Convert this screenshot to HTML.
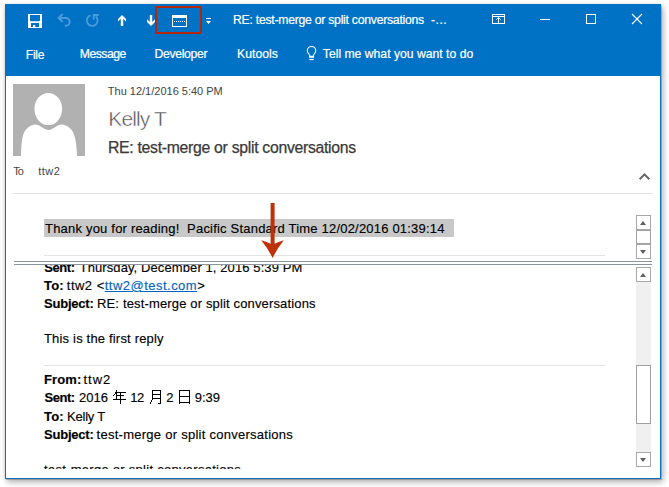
<!DOCTYPE html>
<html><head><meta charset="utf-8">
<style>
html,body{margin:0;padding:0;background:#fff;width:669px;height:487px;overflow:hidden;position:relative;font-family:"Liberation Sans",sans-serif;}
.a{position:absolute;white-space:pre;}
#win{position:absolute;left:5px;top:4px;width:654px;height:473px;border:1px solid #0a71c4;background:#fff;box-shadow:1px 1px 0 rgba(120,90,70,0.35), 2px 3px 6px rgba(0,0,0,0.33), -1px 0 2px rgba(140,110,90,0.12);}
#bar{position:absolute;left:5px;top:4px;width:656px;height:72px;background:#0072c6;}
b{font-weight:bold;}
.sbtn{border:1px solid #a8a8a8;background:#fff;}
.sthumb{border:1px solid #a0a0a0;background:#fff;}
.tu,.td{position:absolute;left:3px;width:0;height:0;border-left:3.5px solid transparent;border-right:3.5px solid transparent;}
.tu{top:4.5px;border-bottom:4px solid #606060;}
.td{top:5px;border-top:4px solid #606060;}
a{color:#0563c1;text-decoration:underline;-webkit-text-stroke-color:#0563c1;}
</style></head><body>
<div id="win"></div>
<div id="bar"></div>
<!-- quick access icons -->
<svg class="a" style="left:0;top:0" width="669" height="76" viewBox="0 0 669 76">
  <!-- save -->
  <g fill="#fff">
    <path d="M28 14h14v14h-14z M30 15v5.5l0.8 0.8h8.4l0.8-0.8v-5.5z M31 23v4h2v-2h2.2v2h3.8v-4z" fill-rule="evenodd"/>
  </g>
  <!-- undo (dim) -->
  <g fill="none" stroke="#4d9ad8" stroke-width="1.9">
    <path d="M58.5 18h7.3a3.9 3.9 0 0 1 0 7.8h-1"/>
    <path d="M62.6 14l-4 4l4 4"/>
  </g>
  <!-- redo circular (dim) -->
  <g fill="none" stroke="#4d9ad8" stroke-width="1.8">
    <path d="M90.6 15.3a5.4 5.4 0 1 0 5.2 1.1"/>
    <path d="M93.7 19.6v-4.6h5.1"/>
  </g>
  <!-- up arrow -->
  <path d="M122 14.9L126 18.9V21.6L123.2 18.8V25.9H120.8V18.8L118 21.6V18.9Z" fill="#fff"/>
  <!-- down arrow -->
  <path d="M151 25.9L147 21.9V19.2L149.8 22V14.9H152.2V22L155 19.2V21.9Z" fill="#fff"/>
  <!-- red highlight box -->
  <rect x="156" y="7" width="45" height="26" fill="none" stroke="#b3260c" stroke-width="2"/>
  <!-- window icon -->
  <g fill="#fff">
    <path d="M172 15h15v12h-15z M173 18v8h13v-8z" fill-rule="evenodd"/>
    <rect x="174" y="21" width="1" height="1"/><rect x="176" y="21" width="1" height="1"/><rect x="178" y="21" width="1" height="1"/>
    <rect x="180" y="21" width="1" height="1"/><rect x="182" y="21" width="1" height="1"/><rect x="184" y="21" width="1" height="1"/>
  </g>
  <!-- customize dropdown -->
  <g fill="#fff">
    <rect x="206" y="18" width="5" height="1"/>
    <path d="M206 21h5l-2.5 3z"/>
  </g>
  <!-- ribbon display options -->
  <g fill="none" stroke="#fff" stroke-width="1">
    <rect x="492.5" y="14.5" width="12" height="9"/>
    <path d="M492.5 16.5h12"/>
    <path d="M498.5 24v-6.5 M496.3 19.7l2.2-2.2l2.2 2.2"/>
  </g>
  <!-- minimize -->
  <rect x="540" y="19" width="10" height="1" fill="#fff"/>
  <!-- maximize -->
  <rect x="586.5" y="14.5" width="9" height="9" fill="none" stroke="#fff" stroke-width="1"/>
  <!-- close -->
  <path d="M632 14l10 10M642 14l-10 10" stroke="#fff" stroke-width="1.1" fill="none"/>
  <!-- lightbulb -->
  <g fill="none" stroke="#fff" stroke-width="1.1">
    <path d="M309.6 56.2v-1c0-0.9-2.25-2.1-2.25-4.55a4.2 4.2 0 0 1 8.4 0c0 2.45-2.25 3.65-2.25 4.55v1z"/>
  </g>
  <rect x="309.1" y="56" width="4.9" height="1.8" fill="#fff"/>
  <rect x="309.3" y="59" width="4.5" height="1.1" fill="#fff"/>
</svg>


<div class="a" id="t_title" style="left:233px;top:14.47px;font-size:12.2px;line-height:12.2px;letter-spacing:-0.24px;color:#fff;-webkit-text-stroke:0.2px #fff;">RE: test-merge or split conversations</div>
<div class="a" id="t_dots" style="left:431.0px;top:14.47px;font-size:12.2px;line-height:12.2px;letter-spacing:0.5px;color:#fff;-webkit-text-stroke:0.2px #fff;">-...</div>
<div class="a" id="t_file" style="left:25.8px;top:48.67px;font-size:12.2px;line-height:12.2px;letter-spacing:-0.3px;color:#fff;-webkit-text-stroke:0.2px #fff;">File</div>
<div class="a" id="t_msg" style="left:79.8px;top:47.67px;font-size:12.2px;line-height:12.2px;letter-spacing:-0.5px;color:#fff;-webkit-text-stroke:0.2px #fff;">Message</div>
<div class="a" id="t_dev" style="left:154.5px;top:47.67px;font-size:12.2px;line-height:12.2px;letter-spacing:-0.31px;color:#fff;-webkit-text-stroke:0.2px #fff;">Developer</div>
<div class="a" id="t_kut" style="left:237.0px;top:47.67px;font-size:12.2px;line-height:12.2px;letter-spacing:0.05px;color:#fff;-webkit-text-stroke:0.2px #fff;">Kutools</div>
<div class="a" id="t_tell" style="left:322.8px;top:47.67px;font-size:12.2px;line-height:12.2px;letter-spacing:0px;color:#fff;-webkit-text-stroke:0.2px #fff;">Tell me what you want to do</div>
<div class="a" id="t_date" style="left:107.8px;top:85.79px;font-size:11px;line-height:11px;letter-spacing:0px;color:#444;">Thu 12/1/2016 5:40 PM</div>
<div class="a" id="t_name" style="left:108.3px;top:108.12px;font-size:21px;line-height:21px;letter-spacing:-0.88px;color:#505050;-webkit-text-stroke:0.45px #fff;">Kelly T</div>
<div class="a" id="t_subj" style="left:108px;top:139.53px;font-size:15.8px;line-height:15.8px;letter-spacing:-0.3px;color:#3a3a3a;-webkit-text-stroke:0.25px #3a3a3a;">RE: test-merge or split conversations</div>
<div class="a" id="t_to" style="left:13.2px;top:165.69px;font-size:11px;line-height:11px;letter-spacing:-1.0px;color:#444;">To</div>
<div class="a" id="t_ttw2" style="left:38.3px;top:165.69px;font-size:11px;line-height:11px;letter-spacing:0.43px;color:#444;">ttw2</div>

<!-- header -->
<svg class="a" style="left:13px;top:84px" width="72" height="72" viewBox="0 0 72 72">
  <rect width="72" height="72" fill="#b1b1b1"/>
  <ellipse cx="35.3" cy="25" rx="13.8" ry="16.1" fill="#fff"/>
  <path d="M8 72 C8.3 58 9.3 50 12.6 46 C15.5 42.3 19.5 40.5 23 40.5 C27.5 41 31 45.9 35.5 45.9 C40 45.9 43.5 41 48 40.5 C51.5 40.5 55.5 42.3 58.6 46 C61.8 50 63.6 58 64 72 Z" fill="#fff"/>
</svg>

<svg class="a" style="left:636px;top:170px" width="16" height="12"><path d="M3.7 9.2L8.5 4.4L13.3 9.2" fill="none" stroke="#666" stroke-width="2"/></svg>
<div class="a" style="left:13px;top:193px;width:640px;height:1px;background:#e1e1e1;"></div>



<div class="a" style="left:13px;top:193px;width:640px;height:1px;background:#e1e1e1;"></div>
<!-- upper pane -->
<div class="a" style="left:44px;top:219px;width:410px;height:18px;background:#c8c8c8;"></div>
<div class="a" id="t_thank" style="left:45px;top:221.6px;font-size:13px;line-height:13px;letter-spacing:0.2px;color:#000;-webkit-text-stroke:0.15px #000;">Thank you for reading!  Pacific Standard Time 12/02/2016 01:39:14</div>
<div class="a" style="left:44px;top:255px;width:561px;height:1px;background:#e3e3e3;"></div>
<div class="a sbtn" style="left:636px;top:215px;width:13px;height:13px;"><div class="tu"></div></div>
<div class="a sthumb" style="left:636px;top:230px;width:13px;height:12px;"></div>
<div class="a sbtn" style="left:636px;top:244px;width:13px;height:13px;"><div class="td"></div></div>
<div class="a" style="left:14px;top:261px;width:638px;height:1px;background:#8c939b;"></div>
<div class="a" style="left:14px;top:264px;width:638px;height:1px;background:#8c939b;"></div>
<!-- lower pane -->
<div class="a" id="lower" style="left:0px;top:265px;width:634px;height:204px;overflow:hidden;">
<div class="a" style="left:0;top:-265px;width:634px;height:487px;">
<div class="a" id="l1a" style="left:44.3px;top:261.00px;font-size:13px;line-height:13px;letter-spacing:-0.45px;color:#000;-webkit-text-stroke:0.15px #000;"><b>Sent:</b></div>
<div class="a" id="l1b" style="left:79.6px;top:261.00px;font-size:13px;line-height:13px;letter-spacing:0.1px;color:#000;-webkit-text-stroke:0.15px #000;">Thursday, December 1, 2016 5:39 PM</div>
<div class="a" id="l2a" style="left:44px;top:278.90px;font-size:13px;line-height:13px;letter-spacing:0.2px;color:#000;-webkit-text-stroke:0.15px #000;"><b>To:</b></div>
<div class="a" id="l2b" style="left:66.8px;top:278.90px;font-size:13px;line-height:13px;letter-spacing:0.48px;color:#000;-webkit-text-stroke:0.15px #000;">ttw2 &lt;<a>ttw2@test.com</a>&gt;</div>
<div class="a" id="l3a" style="left:44px;top:296.90px;font-size:13px;line-height:13px;letter-spacing:-0.22px;color:#000;-webkit-text-stroke:0.15px #000;"><b>Subject:</b></div>
<div class="a" id="l3b" style="left:97px;top:296.90px;font-size:13px;line-height:13px;letter-spacing:0.15px;color:#000;-webkit-text-stroke:0.15px #000;">RE: test-merge or split conversations</div>
<div class="a" id="l4" style="left:44px;top:331.90px;font-size:13px;line-height:13px;letter-spacing:0.18px;color:#000;-webkit-text-stroke:0.15px #000;">This is the first reply</div>
<div class="a" id="l5a" style="left:44px;top:372.90px;font-size:13px;line-height:13px;letter-spacing:0.1px;color:#000;-webkit-text-stroke:0.15px #000;"><b>From:</b></div>
<div class="a" id="l5b" style="left:83.5px;top:372.90px;font-size:13px;line-height:13px;letter-spacing:1.0px;color:#000;-webkit-text-stroke:0.15px #000;">ttw2</div>
<div class="a" id="l6a" style="left:44.5px;top:391.30px;font-size:13px;line-height:13px;letter-spacing:-0.45px;color:#000;-webkit-text-stroke:0.15px #000;"><b>Sent:</b></div>
<div class="a" id="l6b" style="left:79px;top:391.30px;font-size:13px;line-height:13px;letter-spacing:0px;color:#000;-webkit-text-stroke:0.15px #000;">2016</div>
<div class="a" id="l6c" style="left:130.3px;top:391.30px;font-size:13px;line-height:13px;letter-spacing:-0.5px;color:#000;-webkit-text-stroke:0.15px #000;">12</div>
<div class="a" id="l6d" style="left:166.2px;top:391.30px;font-size:13px;line-height:13px;letter-spacing:0px;color:#000;-webkit-text-stroke:0.15px #000;">2</div>
<div class="a" id="l6e" style="left:194.7px;top:391.30px;font-size:13px;line-height:13px;letter-spacing:0px;color:#000;-webkit-text-stroke:0.15px #000;">9:39</div>
<div class="a" id="l7a" style="left:44px;top:409.90px;font-size:13px;line-height:13px;letter-spacing:0.2px;color:#000;-webkit-text-stroke:0.15px #000;"><b>To:</b></div>
<div class="a" id="l7b" style="left:67px;top:409.90px;font-size:13px;line-height:13px;letter-spacing:-0.22px;color:#000;-webkit-text-stroke:0.15px #000;">Kelly T</div>
<div class="a" id="l8a" style="left:44px;top:427.90px;font-size:13px;line-height:13px;letter-spacing:-0.22px;color:#000;-webkit-text-stroke:0.15px #000;"><b>Subject:</b></div>
<div class="a" id="l8b" style="left:96.6px;top:427.90px;font-size:13px;line-height:13px;letter-spacing:0.26px;color:#000;-webkit-text-stroke:0.15px #000;">test-merge or split conversations</div>
<div class="a" id="l9" style="left:44px;top:463.00px;font-size:13px;line-height:13px;letter-spacing:0.28px;color:#000;-webkit-text-stroke:0.15px #000;">test-merge or split conversations</div>

<div class="a" style="left:44px;top:365px;width:561px;height:1px;background:#e3e3e3;"></div>
</div>
</div>
<div class="a sbtn" style="left:636px;top:267px;width:13px;height:13px;"><div class="tu"></div></div>
<div class="a" style="left:636px;top:282px;width:15px;height:170px;background:#f0f0f0;"></div>
<div class="a sthumb" style="left:636px;top:365px;width:13px;height:57px;"></div>
<div class="a sbtn" style="left:636px;top:452px;width:13px;height:13px;"><div class="td"></div></div>
<svg class="a" style="left:0;top:0" width="669" height="487" shape-rendering="crispEdges"><g fill="#000"><rect x="116" y="390" width="1" height="1"/><rect x="116" y="391" width="1" height="1"/><rect x="115" y="392" width="1" height="1"/><rect x="115" y="393" width="1" height="1"/><rect x="114" y="394" width="1" height="1"/><rect x="113" y="395" width="1" height="1"/><rect x="116" y="392" width="10" height="1"/><rect x="116" y="395" width="8" height="1"/><rect x="116" y="392" width="1" height="8"/><rect x="113" y="399" width="13" height="1"/><rect x="120" y="392" width="1" height="12"/><rect x="152" y="390" width="1" height="10"/><rect x="151" y="400" width="1" height="1"/><rect x="151" y="401" width="1" height="1"/><rect x="150" y="402" width="1" height="1"/><rect x="150" y="403" width="1" height="1"/><rect x="160" y="390" width="1" height="14"/><rect x="152" y="390" width="9" height="1"/><rect x="152" y="394" width="9" height="1"/><rect x="152" y="398" width="9" height="1"/><rect x="158" y="403" width="3" height="1"/><rect x="179" y="390" width="1" height="14"/><rect x="189" y="390" width="1" height="14"/><rect x="179" y="390" width="11" height="1"/><rect x="179" y="396" width="11" height="1"/><rect x="179" y="402" width="11" height="1"/></g></svg>

<svg class="a" style="left:0;top:0" width="669" height="487" viewBox="0 0 669 487">
  <path d="M270.6 203h4v42h-4z" fill="#bd3307"/>
  <path d="M261.2 240.3Q266 241.3 270.6 243.8L274.6 243.8Q279.2 241.3 283.8 240.3Q277.4 248.3 272.6 257.9Q267.8 248.3 261.2 240.3z" fill="#bd3307"/>
</svg>


</body></html>
